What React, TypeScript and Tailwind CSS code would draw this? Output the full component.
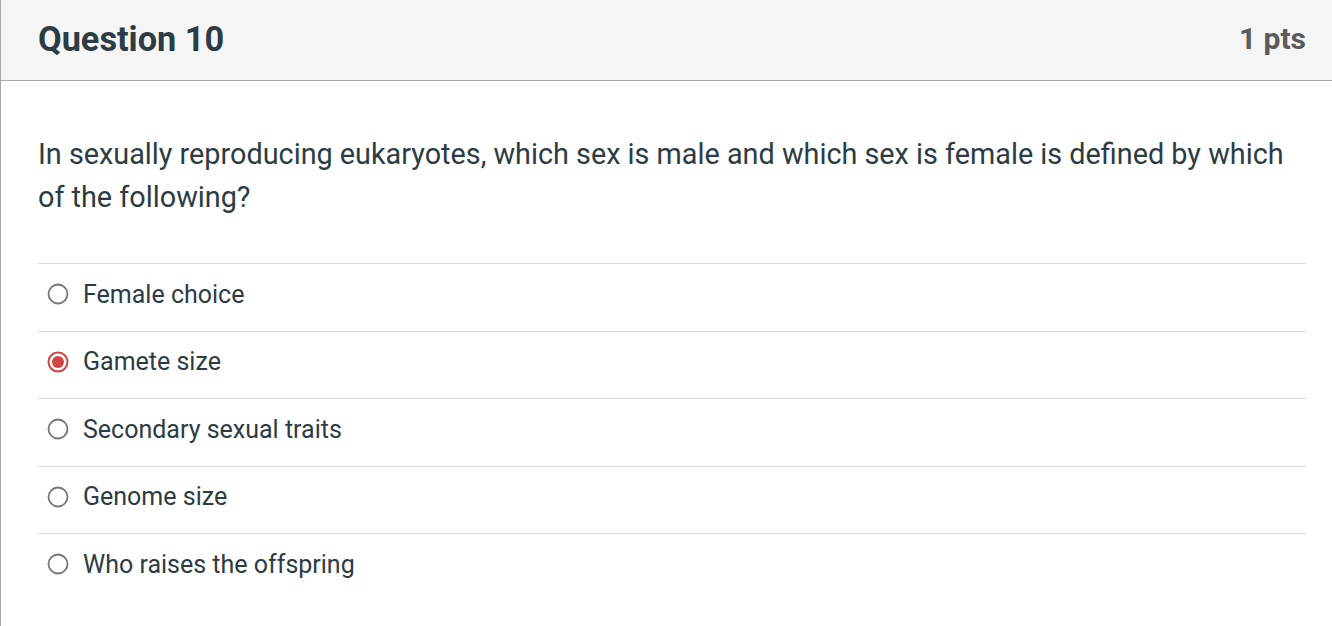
import React from "react";

const options = [
  { label: "Female choice", checked: false },
  { label: "Gamete size", checked: true },
  { label: "Secondary sexual traits", checked: false },
  { label: "Genome size", checked: false },
  { label: "Who raises the offspring", checked: false },
];

function Radio({ checked }: { checked: boolean }) {
  if (checked) {
    return (
      <svg width="22" height="22" viewBox="0 0 22 22" className="shrink-0">
        <circle cx="11" cy="11" r="9.5" fill="white" stroke="#d04444" strokeWidth="2" />
        <circle cx="11" cy="11" r="6" fill="#d04444" />
      </svg>
    );
  }
  return (
    <svg width="22" height="22" viewBox="0 0 22 22" className="shrink-0">
      <circle cx="11" cy="11" r="9.5" fill="white" stroke="#767676" strokeWidth="1.8" />
    </svg>
  );
}

export default function App() {
  return (
    <div
      className="w-[1332px] h-[626px] bg-white overflow-hidden"
      style={{ fontFamily: "Roboto, 'Liberation Sans', sans-serif" }}
    >
      <div className="border-l border-[#a8a8a8] h-full">
        <div className="h-[81px] bg-[#f5f5f5] border-b border-[#a8a8a8] flex items-center justify-between pl-[37px] pr-[26px]">
          <div className="text-[34.3px] font-bold text-[#2d3b45] leading-none pb-[2px]">Question 10</div>
          <div className="text-[30px] font-bold text-[#5b5b5b] leading-none pb-[2px]">1 pts</div>
        </div>
        <div className="pl-[37px] pr-[26px] pt-[52px]">
          <p className="text-[28.8px] leading-[43px] text-[#2d3b45]">
            In sexually reproducing eukaryotes, which sex is male and which sex is female is defined by which of the following?
          </p>
          <div className="mt-[44px]">
            {options.map((o) => (
              <div
                key={o.label}
                className="h-[67.5px] border-t border-[#dcdcdc] flex items-center pl-[9px] pb-[6px] gap-[14px]"
              >
                <Radio checked={o.checked} />
                <span className="text-[25px] text-[#2d3b45] leading-none">{o.label}</span>
              </div>
            ))}
          </div>
        </div>
      </div>
    </div>
  );
}
